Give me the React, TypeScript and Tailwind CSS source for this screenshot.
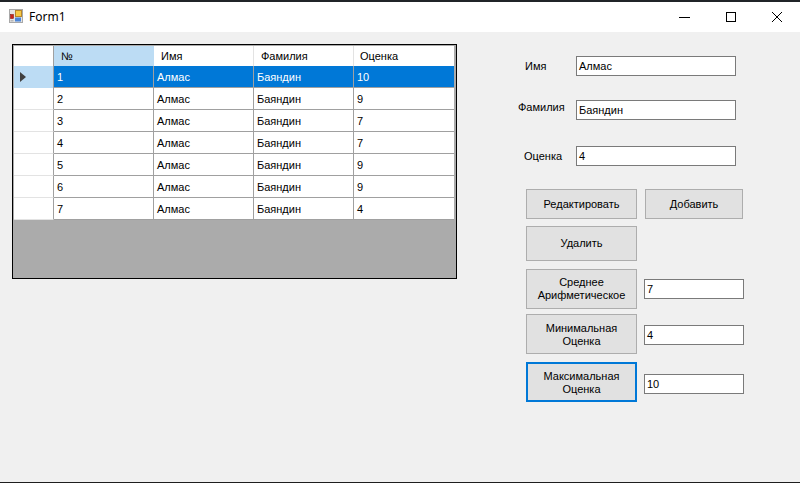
import React from 'react';

const rows = [
  { id: '1', score: '10' },
  { id: '2', score: '9' },
  { id: '3', score: '7' },
  { id: '4', score: '7' },
  { id: '5', score: '9' },
  { id: '6', score: '9' },
  { id: '7', score: '4' },
];

const FormIcon = () => (
  <svg width="14" height="14" viewBox="0 0 14 14" className="shrink-0 -mt-[2px]">
    <rect x="0.5" y="0.5" width="13" height="13" fill="#e4e4e4" stroke="#a8a8a8" />
    <rect x="6.5" y="1.5" width="6" height="6" fill="#f6c945" stroke="#b8862a" />
    <rect x="1.5" y="5.5" width="3" height="4" fill="#c8241c" stroke="#8a1a14" strokeWidth="0.6" />
    <rect x="6" y="8.5" width="6" height="4" fill="#4d86d8" />
    <rect x="1.5" y="11" width="3" height="1.5" fill="#b8b8b8" />
  </svg>
);

const TitleBar = () => (
  <div className="h-[30px] bg-white flex items-center pl-[9px] shrink-0">
    <FormIcon />
    <span className="ml-[6px] text-[12px] text-black font-['Noto_Sans',sans-serif]">Form1</span>
    <div className="ml-auto flex items-center">
      <div className="w-[46px] h-[30px] flex items-center justify-center">
        <svg width="12" height="12" viewBox="0 0 12 12"><path d="M0 6.5H11" stroke="#000" /></svg>
      </div>
      <div className="w-[46px] h-[30px] flex items-center justify-center">
        <svg width="12" height="12" viewBox="0 0 12 12"><rect x="1.5" y="1.5" width="9" height="9" fill="none" stroke="#000" /></svg>
      </div>
      <div className="w-[46px] h-[30px] flex items-center justify-center">
        <svg width="12" height="12" viewBox="0 0 12 12"><path d="M1 1L11 11M11 1L1 11" stroke="#000" /></svg>
      </div>
    </div>
  </div>
);

const DataGrid = () => (
  <div className="w-[445px] h-[235px] border border-black bg-[#ababab] p-px shrink-0 text-[11px] text-black">
    <div className="flex h-[20px] w-[440px] bg-white">
      <div className="w-[40px] border-r border-[#a0a0a0]" />
      <div className="w-[100px] bg-[#bcdcf4] pl-[7px] flex items-center">№</div>
      <div className="w-[100px] border-r border-[#e3e3e3] pl-[7px] flex items-center">Имя</div>
      <div className="w-[100px] border-r border-[#e3e3e3] pl-[7px] flex items-center">Фамилия</div>
      <div className="w-[100px] pl-[6px] flex items-center">Оценка</div>
    </div>
    {rows.map((row, i) => (
      <div key={row.id} className={`flex h-[22px] w-[440px] ${i === 0 ? 'bg-[#0078d7] text-white' : 'bg-white'}`}>
        <div className={`w-[40px] border-r border-[#a0a0a0] flex items-center pl-[6px] ${i === 0 ? 'bg-[#bcdcf4]' : 'bg-white border-b border-b-[#e3e3e3]'}`}>
          {i === 0 && (
            <svg width="6" height="10" viewBox="0 0 6 10"><path d="M0 0L6 5L0 10Z" fill="#404040" /></svg>
          )}
        </div>
        <div className="w-[100px] border-r border-b border-[#a0a0a0] pl-[3px] pt-[2px] flex items-center">{row.id}</div>
        <div className="w-[100px] border-r border-b border-[#a0a0a0] pl-[3px] pt-[2px] flex items-center">Алмас</div>
        <div className="w-[100px] border-r border-b border-[#a0a0a0] pl-[3px] pt-[2px] flex items-center">Баяндин</div>
        <div className="w-[100px] border-b border-[#a0a0a0] pl-[3px] pt-[2px] flex items-center">{row.score}</div>
      </div>
    ))}
  </div>
);

const Field = ({ value, className }: { value: string; className: string }) => (
  <div className={`h-[20px] border border-[#7a7a7a] bg-white flex items-center pl-[2px] text-[11px] text-black ${className}`}>
    {value}
  </div>
);

const Btn = ({ children, className }: { children: React.ReactNode; className: string }) => (
  <button className={`bg-[#e1e1e1] border border-[#adadad] text-[11px] leading-[13px] text-black text-center ${className}`}>
    {children}
  </button>
);

export default function App() {
  return (
    <div className="w-[800px] h-[483px] flex flex-col bg-[#f0f0f0] border-t-2 border-b border-t-[#202428] border-b-[#1e1e1e] overflow-hidden font-['Liberation_Sans',Arial,sans-serif]">
      <TitleBar />
      <div className="flex flex-1 pl-3 pt-3 items-start">
        <DataGrid />
        <div className="flex flex-col text-[11px] text-black ml-[61px] pt-[12px]">
          <div className="flex items-center h-[20px]">
            <span className="ml-[7px] w-[51px]">Имя</span>
            <Field value="Алмас" className="w-[160px]" />
          </div>
          <div className="flex h-[20px] mt-[24px]">
            <span className="w-[58px] -mt-[1px]">Фамилия</span>
            <Field value="Баяндин" className="w-[160px]" />
          </div>
          <div className="flex items-center h-[20px] mt-[26px]">
            <span className="ml-[6px] w-[52px]">Оценка</span>
            <Field value="4" className="w-[160px]" />
          </div>
          <div className="flex gap-[8px] ml-[8px] mt-[23px]">
            <Btn className="w-[111px] h-[30px]">Редактировать</Btn>
            <Btn className="w-[98px] h-[30px]">Добавить</Btn>
          </div>
          <Btn className="w-[111px] h-[35px] ml-[8px] mt-[7px]">Удалить</Btn>
          <div className="flex items-center gap-[7px] ml-[8px] mt-[8px]">
            <Btn className="w-[111px] h-[40px]">Среднее<br />Арифметическое</Btn>
            <Field value="7" className="w-[100px]" />
          </div>
          <div className="flex items-center gap-[7px] ml-[8px] mt-[5px]">
            <Btn className="w-[111px] h-[40px] pt-[2px]">Минимальная<br />Оценка</Btn>
            <Field value="4" className="w-[100px] mt-[2px]" />
          </div>
          <div className="flex items-center gap-[7px] ml-[8px] mt-[8px]">
            <Btn className="w-[111px] h-[40px] pt-[2px] !border-2 !border-[#0078d7]">Максимальная<br />Оценка</Btn>
            <Field value="10" className="w-[100px] mt-[4px]" />
          </div>
        </div>
      </div>
    </div>
  );
}
